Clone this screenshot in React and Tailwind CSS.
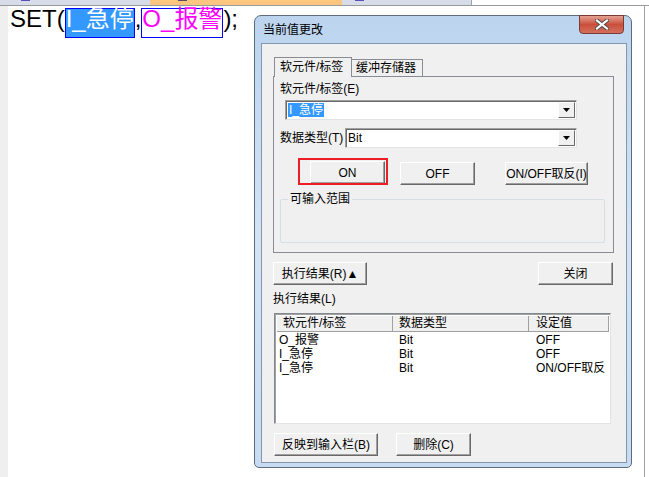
import React from 'react';

const ui = "font-['Liberation_Sans','Noto_Sans_CJK_SC',sans-serif]";

const Btn = ({ children, className = '' }) => (
  <div
    className={`flex items-center justify-center h-[23px] bg-[#f0f0f0] border border-t-white border-l-white border-r-[#696969] border-b-[#696969] shadow-[inset_-1px_-1px_0_#a0a0a0] text-[12px] text-black ${className}`}
  >
    {children}
  </div>
);

const Combo = ({ children, className = '' }) => (
  <div
    className={`flex items-center h-[20px] bg-white border border-t-[#a0a0a0] border-l-[#a0a0a0] border-r-[#e3e3e3] border-b-[#e3e3e3] shadow-[inset_1px_1px_0_#696969] ${className}`}
  >
    <div className="flex-1 pl-[2px] text-[12px] leading-[14px]">{children}</div>
    <div className="flex items-center justify-center w-[17px] h-[16px] mr-[1px] bg-[#f0f0f0] border border-t-white border-l-white border-r-[#696969] border-b-[#696969]">
      <svg width="7" height="4" viewBox="0 0 7 4">
        <path d="M0 0h7L3.5 4z" fill="#000" />
      </svg>
    </div>
  </div>
);

const rows = [
  ['O_报警', 'Bit', 'OFF'],
  ['I_急停', 'Bit', 'OFF'],
  ['I_急停', 'Bit', 'ON/OFF取反'],
];

export default function App() {
  return (
    <div className={`relative w-[649px] h-[477px] overflow-hidden bg-white ${ui}`}>
      {/* editor tab strip */}
      <div className="flex h-[6px] border-b border-[#9a9a9a]">
        <div className="w-[150px] bg-[#d6dce8] relative">
          <div className="absolute left-[21px] top-0 w-[9px] h-[1px] bg-[#5a4fb8]" />
        </div>
        <div className="w-[192px] bg-[#fec580] relative">
          <div className="absolute left-[28px] top-0 w-[9px] h-[1px] bg-[#5a4a60]" />
        </div>
        <div className="w-[129px] bg-[#d6dce8] relative">
          <div className="absolute left-[13px] top-0 w-[9px] h-[1px] bg-[#5a4fb8]" />
        </div>
        <div className="flex-1 bg-white border-l border-[#9aa4b8]" />
      </div>

      {/* editor body */}
      <div className="flex h-[471px]">
        <div className="w-[8px] bg-[#efefef]" />
        <div className="flex-1 pl-[2px] pt-[2px]">
          <div className="flex items-start text-[24px] leading-[20px]">
            <span className="pt-[1px] text-black">SET(</span>
            <span className="h-[30px] bg-[#3399ff] border border-[#0000ff] text-white">I_急停</span>
            <span className="pt-[1px] text-black">,</span>
            <span className="h-[30px] border border-[#0000ff] text-[#ff00ff]">O_报警</span>
            <span className="pt-[1px] text-black">);</span>
          </div>
        </div>
        <div className="w-[5px] border-l border-[#a0a0a0]" />
      </div>

      {/* dialog window */}
      <div className="absolute left-[254px] top-[15px] w-[378px] h-[453px] rounded-t-[7px] rounded-b-[5px] border border-[#5d6b7d] bg-gradient-to-b from-[#bcd4ee] via-[#d3e4f6] to-[#c7dcf2] flex flex-col">
        {/* title bar */}
        <div className="relative h-[27px] flex items-center pl-[8px]">
          <span className="text-[12px] text-black">当前值更改</span>
          <div className="absolute right-[7px] top-[-1px] w-[45px] h-[19px] rounded-b-[4px] border border-[#7c3a34] bg-gradient-to-b from-[#e4a192] via-[#c94f3c] to-[#d4705a] flex items-center justify-center">
            <svg width="14" height="11" viewBox="0 0 14 11">
              <path d="M2 1.5l10 8M12 1.5l-10 8" stroke="#4b4b4b" strokeWidth="4" strokeLinecap="square" />
              <path d="M2 1.5l10 8M12 1.5l-10 8" stroke="#ffffff" strokeWidth="2.2" strokeLinecap="square" />
            </svg>
          </div>
        </div>

        {/* client area */}
        <div className="ml-[6px] w-[366px] h-[420px] border border-[#8496ab] bg-[#f0f0f0] text-[12px] text-black">
          {/* tabs */}
          <div className="ml-[11px] mt-[12px] w-[341px]">
            <div className="flex items-end h-[20px] pl-[1px]">
              <div className="relative z-10 w-[78px] h-[20px] -mb-px pb-px bg-[#f0f0f0] border border-b-0 border-[#898c95] flex items-center pl-[5px]">
                软元件/标签
              </div>
              <div className="w-[71px] h-[17px] bg-[#f0f0f0] border border-b-0 border-l-0 border-[#898c95] flex items-center pl-[4px]">
                缓冲存储器
              </div>
            </div>
            <div className="h-[177px] border border-[#898c95] bg-[#f0f0f0] flex flex-col">
              <div className="ml-[6px] mt-[5px] leading-[14px]">软元件/标签(E)</div>
              <Combo className="ml-[11px] mt-[4px] w-[292px]">
                <span className="bg-[#3399ff] text-white px-[1px]">I_急停</span>
              </Combo>
              <div className="flex items-center mt-[8px] ml-[6px]">
                <span className="w-[65px] leading-[14px]">数据类型(T)</span>
                <Combo className="w-[232px]">Bit</Combo>
              </div>
              <div className="flex items-start mt-[13px]">
                <div className="relative ml-[36px]">
                  <div className="absolute left-[-12px] top-[-3px] w-[90px] h-[27px] border-2 border-[#ee1c24]" />
                  <Btn className="w-[75px]">ON</Btn>
                </div>
                <Btn className="ml-[15px] mt-[1px] w-[75px]">OFF</Btn>
                <Btn className="ml-[30px] mt-[1px] w-[83px]">ON/OFF取反(I)</Btn>
              </div>
              <div className="relative ml-[6px] mt-[14px] w-[325px] h-[44px] border border-[#d5dfe5] rounded-[2px]">
                <span className="absolute left-[7px] top-[-8px] px-[2px] bg-[#f0f0f0] leading-[14px]">可输入范围</span>
              </div>
            </div>
          </div>

          {/* execute / close */}
          <div className="ml-[11px] mt-[9px] w-[340px] flex justify-between">
            <Btn className="w-[94px] h-[22px]">执行结果(R)▲</Btn>
            <Btn className="w-[75px] h-[22px]">关闭</Btn>
          </div>

          <div className="ml-[11px] mt-[7px] leading-[14px]">执行结果(L)</div>

          {/* result list */}
          <div className="ml-[12px] mt-[7px] w-[337px] h-[111px] bg-white border border-t-[#828790] border-l-[#828790] border-r-[#e3e3e3] border-b-[#e3e3e3] shadow-[inset_1px_1px_0_#a0a0a0] pl-[2px] pt-[2px]">
            <div className="flex h-[16px] bg-[#f0f0f0] border-b border-[#a0a0a0] w-[332px] leading-[15px]">
              <div className="w-[116px] border-r border-[#a0a0a0] pl-[6px]">软元件/标签</div>
              <div className="w-[136px] border-r border-[#a0a0a0] pl-[6px]">数据类型</div>
              <div className="w-[80px] border-r border-[#a0a0a0] pl-[7px]">设定值</div>
            </div>
            <div className="pt-[1px]">
              {rows.map((r, i) => (
                <div key={i} className="flex h-[14px] leading-[14px]">
                  <div className="w-[116px] pl-[2px]">{r[0]}</div>
                  <div className="w-[136px] pl-[6px]">{r[1]}</div>
                  <div className="w-[80px] pl-[7px]">{r[2]}</div>
                </div>
              ))}
            </div>
          </div>

          {/* bottom buttons */}
          <div className="ml-[12px] mt-[9px] flex gap-[18px]">
            <Btn className="w-[104px] h-[22px]">反映到输入栏(B)</Btn>
            <Btn className="w-[75px] h-[22px]">删除(C)</Btn>
          </div>
        </div>
      </div>
    </div>
  );
}
